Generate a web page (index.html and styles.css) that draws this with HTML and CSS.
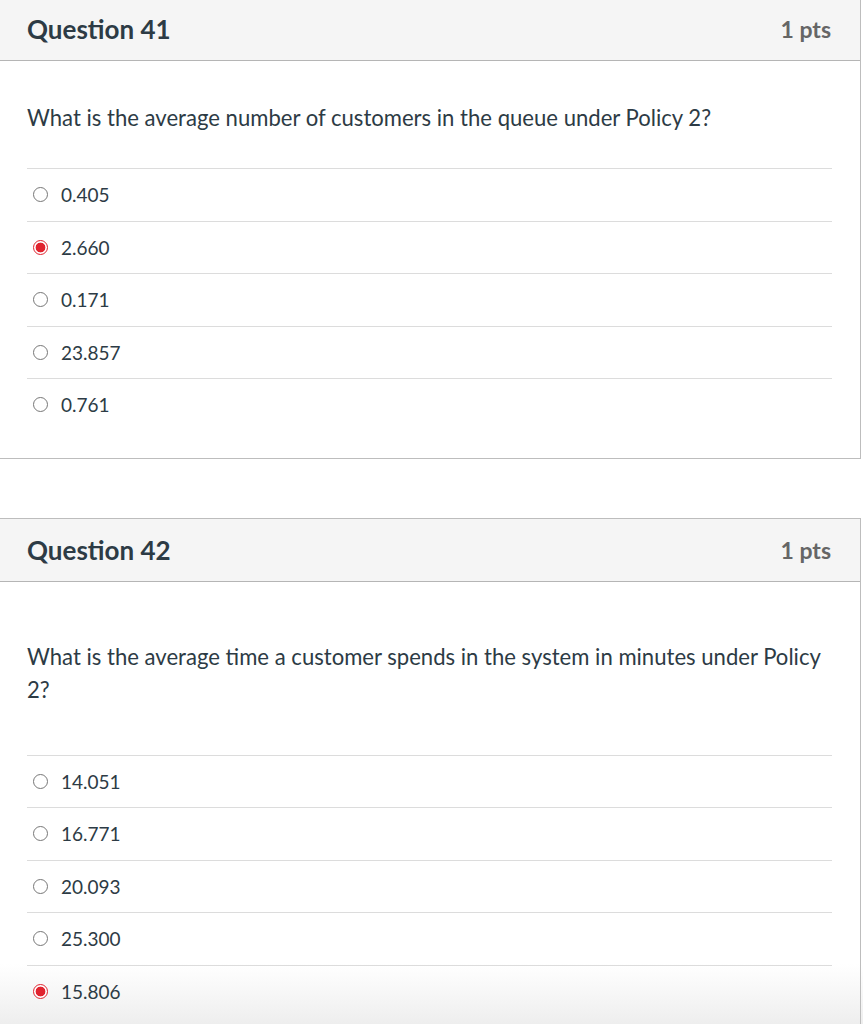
FILE: index.html
```html
<!DOCTYPE html>
<html>
<head>
<meta charset="utf-8">
<link rel="stylesheet" href="styles.css">
</head>
<body>
<div class="page">
  <div class="card q41">
    <div class="card-header">
      <span class="title">Question 41</span>
      <span class="pts">1 pts</span>
    </div>
    <div class="card-body">
      <p class="question">What is the average number of customers in the queue under Policy 2?</p>
      <div class="answers">
        <div class="answer"><span class="radio"></span><span class="label">0.405</span></div>
        <div class="answer"><span class="radio checked"></span><span class="label">2.660</span></div>
        <div class="answer"><span class="radio"></span><span class="label">0.171</span></div>
        <div class="answer"><span class="radio"></span><span class="label">23.857</span></div>
        <div class="answer"><span class="radio"></span><span class="label">0.761</span></div>
      </div>
    </div>
  </div>

  <div class="card q42">
    <div class="card-header">
      <span class="title">Question 42</span>
      <span class="pts">1 pts</span>
    </div>
    <div class="card-body">
      <p class="question">What is the average time a customer spends in the system in minutes under Policy 2?</p>
      <div class="answers">
        <div class="answer"><span class="radio"></span><span class="label">14.051</span></div>
        <div class="answer"><span class="radio"></span><span class="label">16.771</span></div>
        <div class="answer"><span class="radio"></span><span class="label">20.093</span></div>
        <div class="answer"><span class="radio"></span><span class="label">25.300</span></div>
        <div class="answer"><span class="radio checked"></span><span class="label">15.806</span></div>
      </div>
    </div>
  </div>
</div>
<div class="bottom-fade"></div>
</body>
</html>
```

FILE: styles.css
```css
html {
  margin: 0;
  padding: 0;
  background: #fff;
  overflow: hidden;
}
body {
  margin: 0;
  padding: 0;
  font-family: Lato, "Open Sans", sans-serif;
  color: #2d3b45;
  height: 1024px;
  position: relative;
  overflow: hidden;
}
.page {
  margin-top: -3px;
  margin-left: -1px;
  width: 863px;
}
.card {
  border: 1px solid #bdbdbd;
  width: 862px;
  box-sizing: border-box;
}
.q41 {
  margin-bottom: 59px;
}
.card-header {
  height: 62px;
  background: #f5f5f5;
  border-bottom: 1px solid #b5b5b5;
  display: flex;
  align-items: center;
  justify-content: space-between;
  padding: 0 29px 0 27px;
}
.title {
  font-size: 26px;
  font-weight: 700;
  color: #2d3b45;
}
.pts {
  font-size: 23px;
  font-weight: 700;
  color: #666;
}
.card-body {
  padding: 0 28px 0 27px;
}
.question {
  margin: 0;
  font-size: 22.1px;
  line-height: 33px;
  color: #2d3b45;
}
.q41 .card-body {
  padding-top: 40px;
  padding-bottom: 27px;
}
.q41 .answers {
  margin-top: 34px;
}
.q42 .card-body {
  padding-top: 58px;
  padding-bottom: 27px;
}
.q42 .answers {
  margin-top: 49px;
}
.answer {
  border-top: 1px solid #dcdcdc;
  height: 51.5px;
  display: flex;
  align-items: center;
}
.radio {
  width: 15px;
  height: 15px;
  border: 1px solid #777;
  border-radius: 50%;
  margin-left: 6px;
  margin-right: 13px;
  box-sizing: border-box;
  flex: none;
  background: #fff;
}
.radio.checked {
  border: 1.5px solid #e0232e;
  background: radial-gradient(circle, #e0232e 0 4.6px, #fff 5.2px);
}
.label {
  font-size: 19px;
  color: #2d3b45;
}
.bottom-fade {
  position: absolute;
  left: 0;
  right: 0;
  bottom: 0;
  height: 60px;
  z-index: -1;
  background: linear-gradient(to bottom, rgba(238,238,238,0), rgba(238,238,238,1));
  pointer-events: none;
}
```
